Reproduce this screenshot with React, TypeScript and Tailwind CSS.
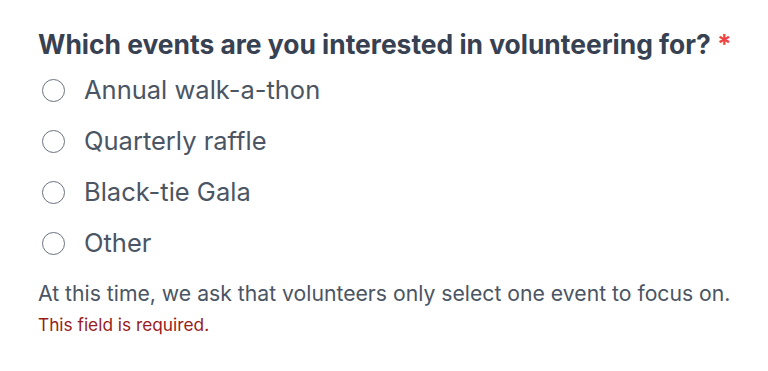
import React from "react";

const options = ["Annual walk-a-thon", "Quarterly raffle", "Black-tie Gala", "Other"];

export default function App() {
  return (
    <div className="w-[768px] h-[371px] bg-white pl-[38px] pt-[28px] font-['Inter',sans-serif]">
      <fieldset>
        <legend className="whitespace-nowrap text-[26.4px] leading-[32px] font-bold text-[#374151]">
          Which events are you interested in volunteering for? <span className="text-[#ef4444]">*</span>
        </legend>
        <div className="flex flex-col mt-[5px]">
          {options.map((o) => (
            <label key={o} className="flex items-center h-[51px] gap-[19px] pl-[4px]">
              <span className="w-[23px] h-[23px] rounded-full border-[1.5px] border-[#6b7280] bg-white shrink-0" />
              <span className="text-[25.5px] text-[#4b5563]">{o}</span>
            </label>
          ))}
        </div>
        <p className="whitespace-nowrap mt-[10px] text-[21.2px] leading-[28px] text-[#4b5563]">
          At this time, we ask that volunteers only select one event to focus on.
        </p>
        <p className="mt-[7px] text-[17.3px] leading-[22px] text-[#991b1b]">This field is required.</p>
      </fieldset>
    </div>
  );
}
